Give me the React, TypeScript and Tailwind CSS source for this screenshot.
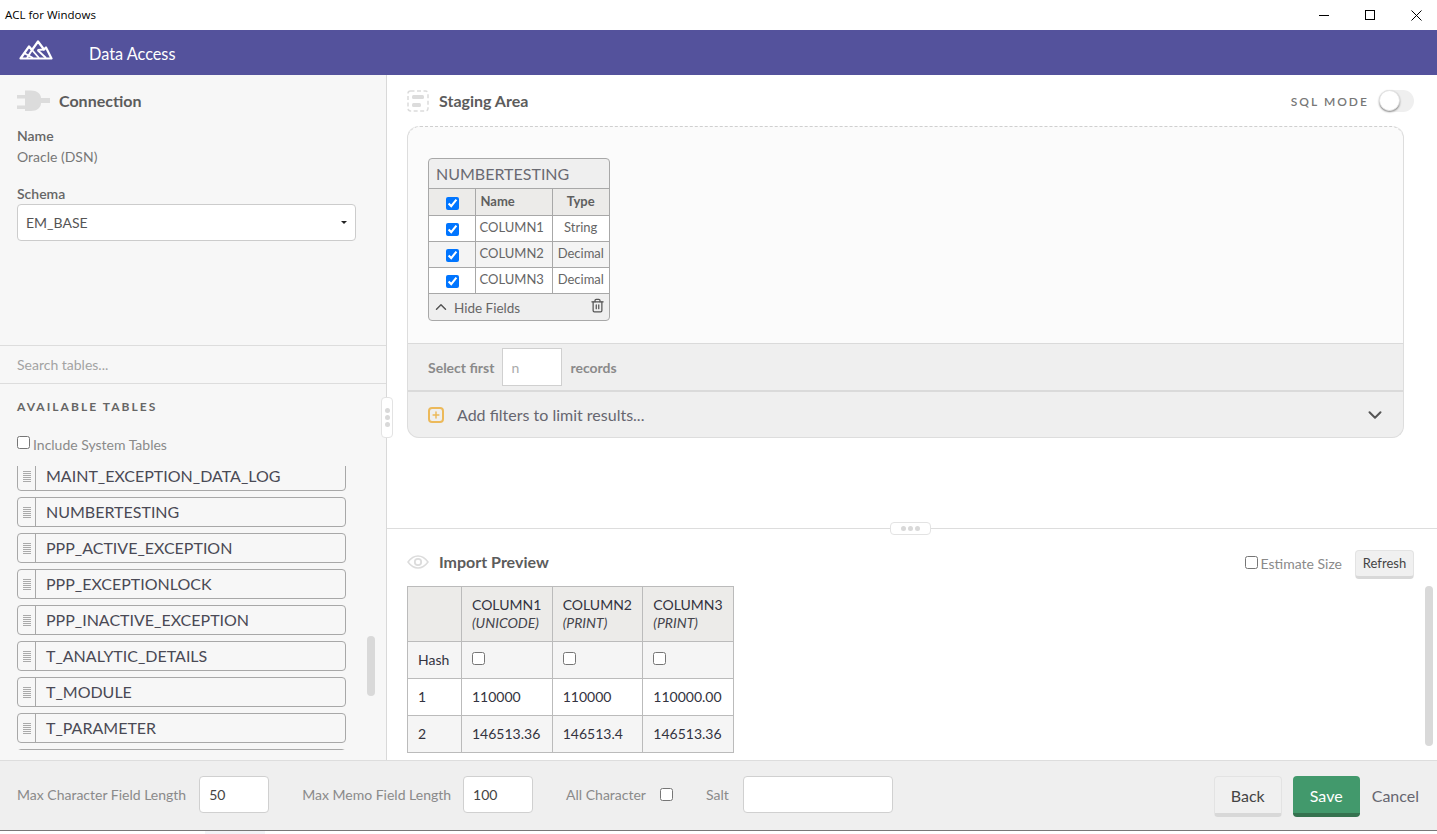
import { ChevronDown, ChevronUp, Plus, Trash2 } from "lucide-react";

const tables = [
  "MAINT_EXCEPTION_DATA_LOG",
  "NUMBERTESTING",
  "PPP_ACTIVE_EXCEPTION",
  "PPP_EXCEPTIONLOCK",
  "PPP_INACTIVE_EXCEPTION",
  "T_ANALYTIC_DETAILS",
  "T_MODULE",
  "T_PARAMETER",
  "",
];

const fields = [
  { name: "COLUMN1", type: "String" },
  { name: "COLUMN2", type: "Decimal" },
  { name: "COLUMN3", type: "Decimal" },
];

function Logo() {
  return (
    <svg width="34" height="20" viewBox="0 0 34 20" fill="none" stroke="#fff" strokeWidth="2.2">
      <path d="M1.500 18.500 L10 6.500 L13 10 L19 1.500 L25 9.500 L27 7.500 L32.500 18.500 Z" fill="#54529c" strokeLinejoin="round" />
      <path d="M10 6.500 L20 18 M5 13 L14 18 M13 10 L8 18 M18.500 10 L25 9.500 M18.500 10 L27 18" strokeWidth="1.900" />
    </svg>
  );
}

function PlugIcon() {
  return (
    <svg width="33" height="22" viewBox="0 0 33 22" fill="#dcdcdc">
      <rect x="0" y="5" width="11" height="3.500" />
      <rect x="0" y="15.500" width="11" height="3.500" />
      <path d="M8 0.500 H14 C20 0.500 24 4 24 8 H33 V13 H24 C24 17.500 20 21 14 21 H8 Z" />
    </svg>
  );
}

function StagingIcon() {
  return (
    <svg width="22" height="22" viewBox="0 0 22 22" fill="none">
      <rect x="1" y="1" width="20" height="20" rx="2.500" stroke="#dcdcdc" strokeWidth="1.500" strokeDasharray="4 2.500" />
      <rect x="5" y="5" width="12" height="4" rx="1.500" fill="#dcdcdc" />
      <rect x="5" y="13" width="9" height="4" rx="1.500" fill="#dcdcdc" />
    </svg>
  );
}

function EyeIcon() {
  return (
    <svg width="22" height="14" viewBox="0 0 22 14" fill="none" stroke="#dcdcdc" strokeWidth="1.500">
      <path d="M1 7 C5 1.500 8 1 11 1 C14 1 17 1.500 21 7 C17 12.500 14 13 11 13 C8 13 5 12.500 1 7 Z" />
      <circle cx="11" cy="7" r="3.200" strokeWidth="1.800" />
    </svg>
  );
}

function GripLines() {
  return (
    <div className="flex flex-col gap-px">
      {[0, 1, 2, 3, 4, 5].map((i) => (
        <div key={i} className="h-px w-2 bg-[#aaaaaa]" />
      ))}
    </div>
  );
}

function TableItem({ name }: { name: string }) {
  return (
    <div className="flex h-[30px] w-[329px] shrink-0 items-center rounded border border-[#a8a8a8] bg-[#f7f7f7]">
      <div className="flex h-full w-[18px] shrink-0 items-center justify-center border-r border-[#a8a8a8]">
        <GripLines />
      </div>
      <span className="pl-[10px] text-[16px] text-[#4a4a55]">{name}</span>
    </div>
  );
}

function Sidebar() {
  return (
    <div className="flex w-[387px] shrink-0 flex-col border-r border-[#d9d9d9] bg-[#f7f7f7]">
      <div className="h-[271px] shrink-0 border-b border-[#dddddd] pl-[17px] pt-[15px]">
        <div className="flex h-[22px] items-center gap-[9px]">
          <PlugIcon />
          <span className="text-[16px] font-bold text-[#5c5c5c]">Connection</span>
        </div>
        <div className="mt-[14px] text-[14px] font-semibold leading-[20px] text-[#666666]">Name</div>
        <div className="text-[14px] leading-[21px] text-[#777777]">Oracle (DSN)</div>
        <div className="mt-[17px] text-[14px] font-semibold leading-[20px] text-[#666666]">Schema</div>
        <div className="flex h-[37px] w-[339px] items-center justify-between rounded-sm border border-[#cccccc] bg-white pb-[1px] pl-2 pr-[8px] text-[14px] text-[#555555]">
          <span>EM_BASE</span>
          <span className="h-0 w-0 border-x-[3px] border-t-[3px] border-x-transparent border-t-[#222222]" />
        </div>
      </div>
      <div className="flex h-[38px] shrink-0 items-center border-b border-[#dddddd] pl-[17px] text-[14px] text-[#a3a3a3]">
        Search tables...
      </div>
      <div className="flex min-h-0 flex-1 flex-col pb-[10px] pl-[17px]">
        <div className="mt-[16px] text-[12px] font-bold leading-[14px] tracking-[0.17em] text-[#666666]">AVAILABLE TABLES</div>
        <label className="mt-[22px] flex h-[16px] items-center gap-[3px] text-[14px] text-[#8a8a8a]">
          <input type="checkbox" className="m-0 -mt-[3px] h-[13px] w-[13px]" />
          Include System Tables
        </label>
        <div className="relative mt-[14px] min-h-0 flex-1 overflow-hidden">
          <div className="-mt-[5px] flex flex-col gap-[6px]">
            {tables.map((t, i) => (
              <TableItem key={i} name={t} />
            ))}
          </div>
          <div className="absolute left-[350px] top-[170px] h-[60px] w-2 rounded bg-[#d9d9d9]" />
        </div>
      </div>
    </div>
  );
}

function FieldPicker() {
  return (
    <div className="w-[182px] overflow-hidden rounded border border-[#a8a8a8] bg-[#efefef] text-[#666666]">
      <div className="flex h-[30px] items-center border-b border-[#a8a8a8] pl-[7px] text-[16px] text-[#6a6a72]">NUMBERTESTING</div>
      <table className="w-full border-collapse text-[13px]">
        <tbody>
          <tr className="h-[26px] bg-[#ecebe9] font-bold text-[#5f5f5f]">
            <td className="w-[46px] border-r border-b border-[#a8a8a8] pl-px pt-[2px] text-center"><input type="checkbox" checked readOnly className="m-0 h-[13px] w-[13px] align-middle" /></td>
            <td className="w-[77px] border-r border-b border-[#a8a8a8] pb-[1px] pl-[5px]">Name</td>
            <td className="border-b border-[#a8a8a8] pb-[1px] text-center">Type</td>
          </tr>
          {fields.map((f, i) => (
            <tr key={f.name} className={i % 2 === 0 ? "h-[26px] bg-white" : "h-[26px] bg-[#f4f4f4]"}>
              <td className="border-r border-b border-[#a8a8a8] pl-px pt-[2px] text-center"><input type="checkbox" checked readOnly className="m-0 h-[13px] w-[13px] align-middle" /></td>
              <td className="border-r border-b border-[#a8a8a8] pl-[4px]">{f.name}</td>
              <td className="border-b border-[#a8a8a8] text-center">{f.type}</td>
            </tr>
          ))}
        </tbody>
      </table>
      <div className="flex h-[26px] items-center pl-[3px] pr-[4px] pt-[3px] text-[13.500px]">
        <ChevronUp size={18} strokeWidth={2} className="-mt-[2px] text-[#555555]" />
        <span className="ml-[4px] flex-1">Hide Fields</span>
        <Trash2 size={15} className="-mt-[6px] text-[#555555]" />
      </div>
    </div>
  );
}

function StagingArea() {
  return (
    <div className="h-[454px] shrink-0 border-b border-[#dddddd] px-5">
      <div className="flex h-[51px] items-center justify-between pr-[3px]">
        <div className="flex items-center gap-[10px]">
          <StagingIcon />
          <span className="text-[16px] font-bold text-[#5c5c5c]">Staging Area</span>
        </div>
        <div className="flex items-center gap-[10px]">
          <span className="mt-[3px] text-[12px] font-semibold tracking-[0.17em] text-[#777777]">SQL MODE</span>
          <div className="relative h-[22px] w-[35px] rounded-full bg-[#efefef]">
            <div className="absolute left-0 top-0 h-[21px] w-[21px] rounded-full border border-[#e5e5e5] bg-white shadow-[0_1px_2px_rgba(0,0,0,0.45)]" />
          </div>
        </div>
      </div>
      <div className="w-[997px] overflow-hidden rounded-xl border border-[#dddddd] border-t-0 bg-[#efefef]">
        <div className="h-[217px] rounded-t-xl border-t border-dashed border-[#cfcfcf] bg-[#fbfbfb] pl-5 pt-[31px]">
          <FieldPicker />
        </div>
        <div className="flex h-[49px] items-center border-y-2 border-[#dadada] border-t-[1px] pl-5 text-[14px] font-bold text-[#8a8a8a]">
          <span>Select first</span>
          <div className="ml-[8px] flex h-[38px] w-[60px] items-center border border-[#d0d0d0] bg-white pl-[8px] font-normal text-[#aaaaaa]">n</div>
          <span className="ml-2">records</span>
        </div>
        <div className="flex h-[45px] items-center pl-5 pr-[17px]">
          <div className="flex h-[16px] w-[16px] items-center justify-center rounded-sm border-2 border-[#ecb95a] text-[#ecb95a]">
            <Plus size={10} strokeWidth={3.500} />
          </div>
          <span className="ml-[13px] flex-1 text-[16px] text-[#666670]">Add filters to limit results...</span>
          <ChevronDown size={22} strokeWidth={2.200} className="text-[#555555]" />
        </div>
      </div>
    </div>
  );
}

function PreviewTable() {
  const cols = [
    ["COLUMN1", "(UNICODE)", "110000", "146513.36"],
    ["COLUMN2", "(PRINT)", "110000", "146513.4"],
    ["COLUMN3", "(PRINT)", "110000.00", "146513.36"],
  ];
  const cell = "border border-[#bbbbbb] pl-[10px] pr-[10px] text-left font-normal";
  return (
    <table className="w-[327px] table-fixed border-collapse text-[14px] text-[#333340]">
      <tbody>
        <tr className="h-[55px] bg-[#ecebe9]">
          <td className={`${cell} w-[54px]`} />
          {cols.map((c) => (
            <td key={c[0]} className={cell}>
              <div className="leading-[18px]">{c[0]}</div>
              <div className="italic leading-[18px] text-[#44444c]">{c[1]}</div>
            </td>
          ))}
        </tr>
        <tr className="h-[37px] bg-[#f5f5f5]">
          <td className={`${cell} pb-[2px]`}>Hash</td>
          {cols.map((c) => (
            <td key={c[0]} className={cell}><input type="checkbox" className="m-0 mb-[4px] block h-[13px] w-[13px]" /></td>
          ))}
        </tr>
        <tr className="h-[37px] bg-white">
          <td className={`${cell} pb-[2px]`}>1</td>
          {cols.map((c) => <td key={c[0]} className={`${cell} pb-[2px]`}>{c[2]}</td>)}
        </tr>
        <tr className="h-[37px] bg-[#f5f5f5]">
          <td className={`${cell} pb-[2px]`}>2</td>
          {cols.map((c) => <td key={c[0]} className={`${cell} pb-[2px]`}>{c[3]}</td>)}
        </tr>
      </tbody>
    </table>
  );
}

function ImportPreview() {
  return (
    <div className="relative min-h-0 flex-1 px-5">
      <div className="flex h-[57px] items-center justify-between pr-[3px] pt-[9px]">
        <div className="flex items-center gap-[10px]">
          <EyeIcon />
          <span className="text-[16px] font-bold text-[#5c5c5c]">Import Preview</span>
        </div>
        <div className="mt-[3px] flex items-center">
          <label className="flex items-center gap-[3px] text-[14px] text-[#8a8a8a]">
            <input type="checkbox" className="m-0 -mt-[3px] h-[13px] w-[13px]" />
            Estimate Size
          </label>
          <button type="button" className="ml-[13px] mt-[2px] h-[29px] w-[59px] rounded-sm border border-[#e3e3e3] border-b-[3px] border-b-[#d8d8d8] bg-[#f0f0f0] pt-px text-[13px] text-[#444444]">Refresh</button>
        </div>
      </div>
      <PreviewTable />
      <div className="absolute right-[4px] top-[57px] h-[160px] w-2 rounded bg-[#d9d9d9]" />
    </div>
  );
}

export default function App() {
  return (
    <div className="relative flex h-[834px] w-[1437px] flex-col overflow-hidden bg-white font-['Lato',sans-serif]">
      <div className="flex h-[30px] shrink-0 items-center justify-between pl-[5px] pr-[15px] font-['Open_Sans',sans-serif] text-[11.500px] text-black">
        <span className="-mt-[1px]">ACL for Windows</span>
        <div className="flex items-center gap-[36px]">
          <div className="h-px w-[10px] bg-black" />
          <div className="h-[10px] w-[10px] border border-black" />
          <svg width="11" height="11" viewBox="0 0 11 11" stroke="#000" strokeWidth="1"><path d="M0.500 0.500 L10.500 10.500 M10.500 0.500 L0.500 10.500" /></svg>
        </div>
      </div>
      <div className="flex h-[45px] shrink-0 items-center bg-[#54529c] pl-[19px] text-white">
        <div className="-mt-[6px]"><Logo /></div>
        <span className="ml-[36px] mt-[3px] text-[16.300px]">Data Access</span>
      </div>
      <div className="flex min-h-0 flex-1">
        <Sidebar />
        <div className="flex min-w-0 flex-1 flex-col">
          <StagingArea />
          <ImportPreview />
        </div>
      </div>
      <div className="flex h-[71px] shrink-0 items-center border-y border-t-[#dddddd] border-b-[#777777] bg-[#efefef] pb-[2px] pl-[17px] pr-[18px] text-[14px] text-[#8a8a8a]">
        <span>Max Character Field Length</span>
        <div className="ml-[13px] flex h-[37px] w-[70px] items-center rounded-sm border border-[#d0d0d0] bg-white pl-[9px] text-[#444444]">50</div>
        <span className="ml-[33px]">Max Memo Field Length</span>
        <div className="ml-[12px] flex h-[37px] w-[70px] items-center rounded-sm border border-[#d0d0d0] bg-white pl-[9px] text-[#444444]">100</div>
        <span className="ml-[33px]">All Character</span>
        <input type="checkbox" className="ml-[14px] h-[13px] w-[13px]" />
        <span className="ml-[33px]">Salt</span>
        <div className="ml-[14px] h-[37px] w-[150px] rounded-sm border border-[#d0d0d0] bg-white" />
        <div className="flex-1" />
        <button type="button" className="mt-[3px] h-[41px] w-[68px] rounded-sm border border-[#e3e3e3] border-b-[4px] border-b-[#d8d8d8] bg-[#f0f0f0] pt-[3px] text-[16px] text-[#444444]">Back</button>
        <button type="button" className="ml-[11px] mt-[3px] h-[41px] w-[67px] rounded-sm border-b-[4px] border-b-[#35724f] bg-[#42996c] pt-[3px] text-[16px] text-white">Save</button>
        <span className="ml-[12px] mt-[2px] text-[16px] text-[#666670]">Cancel</span>
      </div>
      <div className="ml-[205px] h-[3px] w-[60px] shrink-0 bg-[#f3f3f7]" />
      <div className="absolute left-[381px] top-[397px] flex h-[41px] w-[12px] flex-col items-center justify-center gap-[2px] rounded-sm border border-[#e3e3e3] bg-white">
        <div className="h-[5px] w-[5px] rounded-full bg-[#d9d9d9]" />
        <div className="h-[5px] w-[5px] rounded-full bg-[#d9d9d9]" />
        <div className="h-[5px] w-[5px] rounded-full bg-[#d9d9d9]" />
      </div>
      <div className="absolute left-[890px] top-[522px] flex h-[13px] w-[41px] items-center justify-center gap-[2px] rounded-sm border border-[#e3e3e3] bg-white">
        <div className="h-[5px] w-[5px] rounded-full bg-[#d9d9d9]" />
        <div className="h-[5px] w-[5px] rounded-full bg-[#d9d9d9]" />
        <div className="h-[5px] w-[5px] rounded-full bg-[#d9d9d9]" />
      </div>
    </div>
  );
}
